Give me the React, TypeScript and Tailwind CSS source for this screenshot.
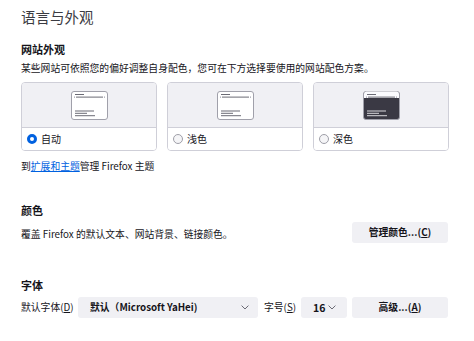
import React from "react";

function Thumb({ dark }: { dark?: boolean }) {
  const line = dark ? "#d7d7db" : "#6b6b75";
  return (
    <svg width="37" height="29" viewBox="0 0 37 29">
      <rect x="0.5" y="0.5" width="36" height="28" rx="2.5" fill={dark ? "#3a3944" : "#fff"} stroke="#a0a0aa" />
      {dark && <path d="M1 3 A2.5 2.5 0 0 1 3.5 0.5 H33.5 A2.5 2.5 0 0 1 36 3 V7 H1 Z" fill="#fbfbfe" />}
      <rect x="4" y="3" width="9" height="1" fill={dark ? "#6b6b75" : line} />
      <rect x="3" y="5.6" width="1" height="1" fill="#8f8f9d" />
      <rect x="5" y="5.6" width="27" height="1" fill="#6b6b75" />
      <rect x="33" y="5.6" width="1" height="1" fill="#8f8f9d" />
      <rect x="4" y="19.5" width="19" height="1" fill={line} />
      <rect x="4" y="21.8" width="12" height="1" fill={line} />
      <rect x="4" y="24.2" width="20" height="1" fill={line} />
    </svg>
  );
}

function Card({ label, checked, dark }: { label: string; checked?: boolean; dark?: boolean }) {
  return (
    <div className="flex-1 border border-[#cfcfd8] rounded-[4px] overflow-hidden">
      <div className="h-[45px] bg-[#f0f0f4] border-b border-[#cfcfd8] flex items-center justify-center">
        <Thumb dark={dark} />
      </div>
      <div className="h-[22px] bg-white flex items-center gap-[4px] px-[5px]">
        {checked ? (
          <span className="w-[10px] h-[10px] rounded-full border-[3px] border-[#0061e0] bg-white" />
        ) : (
          <span className="w-[10px] h-[10px] rounded-full border border-[#9f9fa8] bg-[#f5f5f7]" />
        )}
        <span className="text-[10px] leading-[14px] text-[#15141a]">{label}</span>
      </div>
    </div>
  );
}

function Chevron() {
  return (
    <svg width="8" height="5" viewBox="0 0 8 5" className="shrink-0">
      <path d="M0.6 0.6 L4 4 L7.4 0.6" fill="none" stroke="#5b5b66" strokeWidth="0.9" />
    </svg>
  );
}

export default function App() {
  return (
    <div
      className="w-[474px] h-[341px] bg-white overflow-hidden text-[#15141a]"
      style={{ fontFamily: '"Noto Sans CJK SC", "Noto Sans", sans-serif' }}
    >
      <div className="w-[428px] ml-[21px] pt-[7px] flex flex-col">
        <div className="text-[14.5px] leading-[20px] text-[#3b3b42]">语言与外观</div>

        <div className="mt-[14px] text-[11px] leading-[16px] font-bold">网站外观</div>
        <div className="mt-[4px] text-[9.8px] leading-[14px]">
          某些网站可依照您的偏好调整自身配色，您可在下方选择要使用的网站配色方案。
        </div>

        <div className="mt-[7px] flex gap-[10px]">
          <Card label="自动" checked />
          <Card label="浅色" />
          <Card label="深色" dark />
        </div>

        <div className="mt-[8px] text-[9.8px] leading-[14px]">
          到<span className="text-[#0061e0] underline">扩展和主题</span>管理 Firefox 主题
        </div>

        <div className="mt-[29px] text-[11px] leading-[16px] font-bold">颜色</div>
        <div className="mt-[4px] flex items-center justify-between h-[21px]">
          <span className="text-[9.8px] leading-[14px] mt-[3px]">覆盖 Firefox 的默认文本、网站背景、链接颜色。</span>
          <button className="w-[96px] h-[21px] rounded-[3px] bg-[#f0f0f4] text-[9.8px] font-bold mr-[1px]">
            管理颜色...(<span className="underline">C</span>)
          </button>
        </div>

        <div className="mt-[34px] text-[11px] leading-[16px] font-bold">字体</div>
        <div className="mt-[4px] flex items-center h-[21px] text-[9.8px]">
          <span className="w-[57px]">
            默认字体(<span className="underline">D</span>)
          </span>
          <div className="w-[180px] h-[21px] rounded-[3px] bg-[#f0f0f4] flex items-center justify-between pl-[12px] pr-[9px]">
            <span className="font-bold">默认（Microsoft YaHei)</span>
            <Chevron />
          </div>
          <span className="ml-[6px] w-[37px]">
            字号(<span className="underline">S</span>)
          </span>
          <div className="w-[46px] h-[21px] rounded-[3px] bg-[#f0f0f4] flex items-center gap-[3px] pl-[12px]">
            <span className="font-bold text-[10.5px]">16</span>
            <Chevron />
          </div>
          <button className="ml-[5px] w-[96px] h-[21px] rounded-[3px] bg-[#f0f0f4] font-bold">
            高级...(<span className="underline">A</span>)
          </button>
        </div>
      </div>
    </div>
  );
}
